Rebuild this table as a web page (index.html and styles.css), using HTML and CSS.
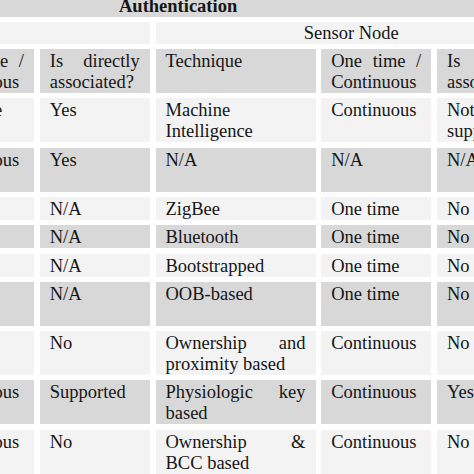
FILE: index.html
```html
<!DOCTYPE html>
<html lang="en">
<head>
<meta charset="utf-8">
<title>Authentication</title>
<link rel="stylesheet" href="styles.css">
</head>
<body>
<div class="table">
  <div class="row grey">
    <div class="cell title">Authentication</div>
  </div>
  <div class="row light head">
    <div class="cell span2"></div>
    <div class="cell span3 center">Sensor Node</div>
  </div>
  <div class="row grey">
    <div class="cell">One time / Continuous</div>
    <div class="cell">Is directly associated?</div>
    <div class="cell">Technique</div>
    <div class="cell">One time / Continuous</div>
    <div class="cell">Is directly associated?</div>
  </div>
  <div class="row light">
    <div class="cell">One time</div>
    <div class="cell">Yes</div>
    <div class="cell">Machine Intelligence</div>
    <div class="cell">Continuous</div>
    <div class="cell">Not supported</div>
  </div>
  <div class="row grey tall">
    <div class="cell">Continuous</div>
    <div class="cell">Yes</div>
    <div class="cell">N/A</div>
    <div class="cell">N/A</div>
    <div class="cell">N/A</div>
  </div>
  <div class="row light">
    <div class="cell"></div>
    <div class="cell">N/A</div>
    <div class="cell">ZigBee</div>
    <div class="cell">One time</div>
    <div class="cell">No</div>
  </div>
  <div class="row grey">
    <div class="cell"></div>
    <div class="cell">N/A</div>
    <div class="cell">Bluetooth</div>
    <div class="cell">One time</div>
    <div class="cell">No</div>
  </div>
  <div class="row light">
    <div class="cell"></div>
    <div class="cell">N/A</div>
    <div class="cell">Bootstrapped</div>
    <div class="cell">One time</div>
    <div class="cell">No</div>
  </div>
  <div class="row grey tall">
    <div class="cell"></div>
    <div class="cell">N/A</div>
    <div class="cell">OOB-based</div>
    <div class="cell">One time</div>
    <div class="cell">No</div>
  </div>
  <div class="row light">
    <div class="cell"></div>
    <div class="cell">No</div>
    <div class="cell">Ownership and proximity based</div>
    <div class="cell">Continuous</div>
    <div class="cell">No</div>
  </div>
  <div class="row grey">
    <div class="cell">Continuous</div>
    <div class="cell">Supported</div>
    <div class="cell">Physiologic key based</div>
    <div class="cell">Continuous</div>
    <div class="cell">Yes</div>
  </div>
  <div class="row light">
    <div class="cell">Continuous</div>
    <div class="cell">No</div>
    <div class="cell">Ownership &amp; BCC based</div>
    <div class="cell">Continuous</div>
    <div class="cell">No</div>
  </div>
</div>
</body>
</html>
```

FILE: styles.css
```css
html, body {
  margin: 0;
  padding: 0;
  overflow: hidden;
  background: #ffffff;
}

body {
  font-family: "Liberation Serif", "Times New Roman", serif;
  font-size: 18.5px;
  color: #161616;
}

/* the table is a crop of a wider one: it starts left of the viewport */
.table {
  display: grid;
  grid-template-columns: 110px 110px 160px 110px 110px;
  column-gap: 5.75px;
  row-gap: 5.3px;
  width: max-content;
  margin: -6px 0 0 -76px;
}

.row {
  display: contents;
}

.cell {
  box-sizing: border-box;
  padding: 2px 10px 0;
  line-height: 21px;
  text-align: justify;
}

.grey > .cell {
  background: #d8d8d8;
}

.light > .cell {
  background: #f3f3f3;
}

.tall > .cell {
  min-height: 44px;
}

.head > .cell {
  line-height: 19.5px;
}

.title {
  grid-column: 1 / -1;
  font-weight: bold;
  padding-left: 195px;
  text-align: left;
}

.span2 {
  grid-column: span 2;
}

.span3 {
  grid-column: span 3;
}

.center {
  text-align: center;
}
```
